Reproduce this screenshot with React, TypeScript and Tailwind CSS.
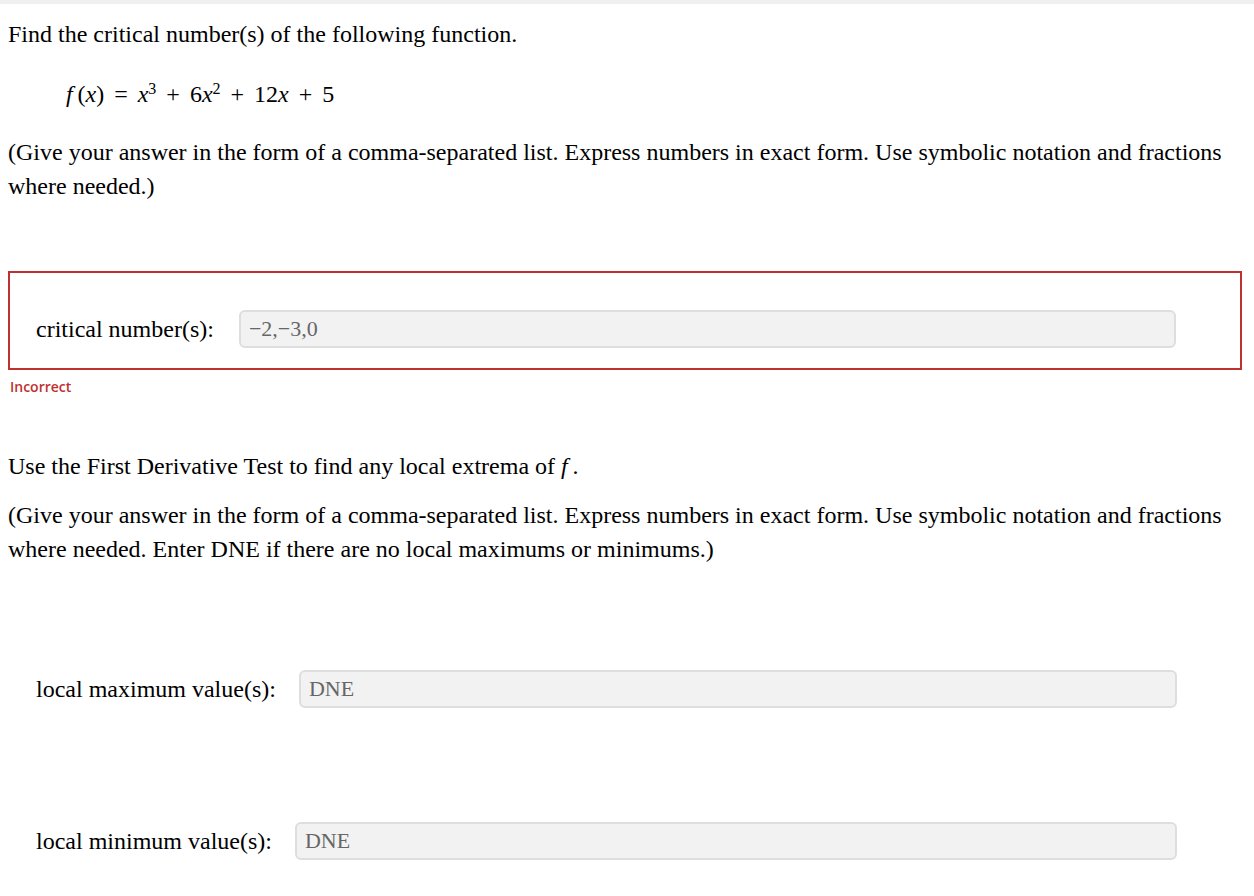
import React from 'react';

const serif = { fontFamily: '"Liberation Serif", "Times New Roman", serif' };

function AnswerInput({ value }: { value: string }) {
  return (
    <div className="flex h-[38px] flex-1 items-center rounded-[6px] border-2 border-[#dedede] bg-[#f2f2f2] px-[8px] text-[22px] text-[#666]">
      {value}
    </div>
  );
}

function AnswerRow({ label, value }: { label: string; value: string }) {
  return (
    <div className="flex items-center pl-[28px] pr-[65px]">
      <span className="mr-[23px]">{label}</span>
      <AnswerInput value={value} />
    </div>
  );
}

function Op({ children }: { children: React.ReactNode }) {
  return <span className="mx-[10px]">{children}</span>;
}

export default function App() {
  return (
    <div className="min-h-screen w-full bg-white" style={serif}>
      <div className="h-[4px] w-full bg-[#f0f0f0]" />
      <div className="pl-[8px] pr-[12px] text-[24px] leading-[34px] text-black">
        <p className="pt-[13px]">Find the critical number(s) of the following function.</p>

        <p className="mt-[26px] pl-[58px]">
          <i>f</i>&thinsp;(<i>x</i>)<Op>=</Op><i>x</i>
          <sup className="text-[16px]">3</sup><Op>+</Op>6<i>x</i>
          <sup className="text-[16px]">2</sup><Op>+</Op>12<i>x</i><Op>+</Op>5
        </p>

        <p className="mt-[24px]">
          (Give your answer in the form of a comma-separated list. Express numbers in exact form. Use symbolic notation and fractions where needed.)
        </p>

        <div className="mt-[68px] flex items-center border-2 border-[#c0302f] pl-[26px] pr-[64px] pt-[37px] pb-[20px]">
          <span className="mr-[25px]">critical number(s):</span>
          <AnswerInput value="−2,−3,0" />
        </div>
        <p
          className="mt-[8px] pl-[2px] text-[14px] font-semibold leading-[18px] text-[#c0302f]"
          style={{ fontFamily: '"Open Sans", "Noto Sans", sans-serif' }}
        >
          Incorrect
        </p>

        <p className="mt-[53px]">
          Use the First Derivative Test to find any local extrema of <i>f</i>&thinsp;.
        </p>
        <p className="mt-[15px]">
          (Give your answer in the form of a comma-separated list. Express numbers in exact form. Use symbolic notation and fractions where needed. Enter DNE if there are no local maximums or minimums.)
        </p>

        <div className="mt-[104px]">
          <AnswerRow label="local maximum value(s):" value="DNE" />
        </div>
        <div className="mt-[114px]">
          <AnswerRow label="local minimum value(s):" value="DNE" />
        </div>
      </div>
    </div>
  );
}
